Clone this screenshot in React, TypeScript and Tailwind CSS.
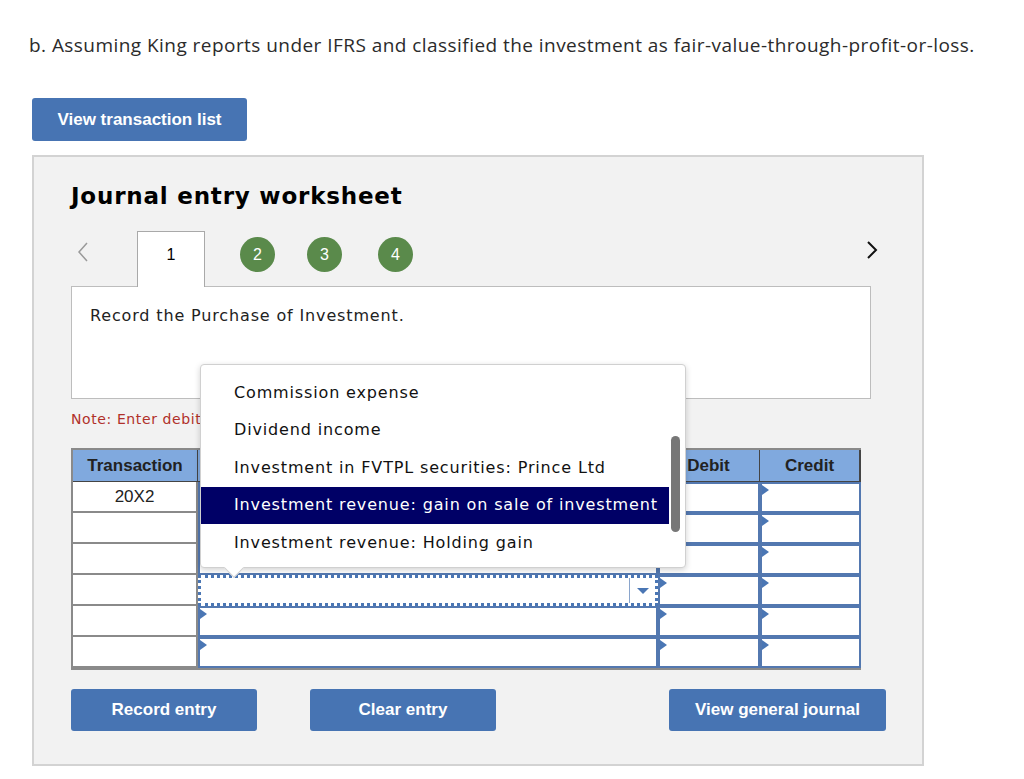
import React from 'react';

const options = [
  'Commission expense',
  'Dividend income',
  'Investment in FVTPL securities: Prince Ltd',
  'Investment revenue: gain on sale of investment',
  'Investment revenue: Holding gain',
];

const verdana = "font-['DejaVu_Sans',Verdana,sans-serif]";
const arial = "font-['Liberation_Sans',Arial,sans-serif]";
const proxima = "font-['Open_Sans','Lato',sans-serif]";

function Marker() {
  return (
    <span className="absolute left-0 top-[1px] h-0 w-0 border-y-[5px] border-l-[7px] border-y-transparent border-l-[#4a76b4]" />
  );
}

function BlueCell({ marker = true }: { marker?: boolean }) {
  return (
    <div className="relative h-full border-2 border-[#5378b0] bg-white">
      {marker && <Marker />}
    </div>
  );
}

function ActionButton({ label, width }: { label: string; width: string }) {
  return (
    <button
      className={`${arial} ${width} h-[42px] rounded-[3px] bg-[#4774b3] text-[17px] font-bold text-white`}
    >
      {label}
    </button>
  );
}

export default function App() {
  const rows = [0, 1, 2, 3, 4, 5];

  return (
    <div className="min-h-[779px] bg-white pl-[29px] pt-[33px]">
      <p className={`${proxima} text-[19px] leading-[24px] tracking-[0.45px] text-[#2b2b2b]`}>
        b. Assuming King reports under IFRS and classified the investment as fair-value-through-profit-or-loss.
      </p>

      <button
        className={`${arial} ml-[3px] mt-[41px] h-[43px] w-[215px] rounded-[3px] bg-[#4774b3] text-[17px] font-bold text-white`}
      >
        View transaction list
      </button>

      <div className="relative ml-[3px] mt-[14px] h-[611px] w-[892px] border-2 border-[#d3d3d3] bg-[#f2f2f2] pl-[37px] pt-[25px]">
        <h2 className={`${verdana} text-[23px] font-bold leading-[28px] tracking-[0.8px] text-black`}>Journal entry worksheet</h2>

        {/* tabs */}
        <div className="mt-[21px] flex h-[55px] w-[810px] items-end">
          <div className="flex h-full w-[66px] items-center">
            <svg width="14" height="22" viewBox="0 0 14 22" className="mb-[14px] ml-[5px]">
              <path d="M11 2 L3 11 L11 20" fill="none" stroke="#9a9a9a" strokeWidth="1.5" />
            </svg>
          </div>
          <div className={`${arial} relative z-10 mb-[-1px] flex h-[56px] w-[68px] justify-center border border-b-0 border-[#a9a9a9] bg-white pt-[11px] text-[16px] text-black`}>
            1
          </div>
          <div className="flex h-full items-center gap-[32px] pb-[8px] pl-[35px]">
            {['2', '3', '4'].map((n, i) => (
              <span
                key={n}
                className={`${arial} flex h-[35px] w-[35px] items-center justify-center rounded-full bg-[#5a8a4b] text-[16px] text-white ${i === 2 ? 'ml-[4px]' : ''}`}
              >
                {n}
              </span>
            ))}
          </div>
          <div className="ml-auto flex h-full w-[40px] items-center justify-center">
            <svg width="14" height="20" viewBox="0 0 14 20" className="mb-[18px] ml-[22px]">
              <path d="M3 2 L11 10 L3 18" fill="none" stroke="#111" strokeWidth="2" />
            </svg>
          </div>
        </div>

        <div className="h-[113px] w-[800px] border border-[#bdbdbd] bg-white pl-[18px] pt-[18px]">
          <p className={`${verdana} text-[16px] leading-[22px] tracking-[0.85px] text-[#222]`}>Record the Purchase of Investment.</p>
        </div>

        <p className={`${verdana} mt-[10px] text-[14px] leading-[20px] tracking-[0.6px] text-[#b0302a]`}>
          Note: Enter debits before credits.
        </p>

        {/* table */}
        <div className="mt-[19px] w-[790px] border-b-2 border-l-2 border-[#8a8a8a]">
          <div className={`${arial} grid h-[34px] grid-cols-[125px_460px_102px_101px] border-t-2 border-[#8a8a8a] bg-[#80a9de] text-[17px] font-bold text-[#222]`}>
            <div className="flex items-center justify-center border-r border-b border-[#444]">Transaction</div>
            <div className="flex items-center justify-center border-r border-b border-[#444]">General Journal</div>
            <div className="flex items-center justify-center border-r border-b border-[#444]">Debit</div>
            <div className="flex items-center justify-center border-b border-r-2 border-[#444]">Credit</div>
          </div>
          {rows.map((r) => (
            <div key={r} className="grid h-[31px] grid-cols-[125px_460px_102px_101px] bg-[#8a8a8a]">
              <div className={`${arial} flex items-center justify-center border-r-2 border-b-2 border-[#8a8a8a] bg-white text-[17px] text-[#222] ${r === 5 ? 'border-b-0' : ''}`}>
                {r === 0 ? '20X2' : ''}
              </div>
              <div className="bg-white">
                {r === 3 ? (
                  <div className="flex h-full border-[3px] border-dotted border-[#4a76b4] bg-white">
                    <div className="flex-1" />
                    <div className="flex w-[26px] items-center justify-center border-l border-[#8aa5cc]">
                      <span className="h-0 w-0 border-x-[6px] border-t-[6px] border-x-transparent border-t-[#4a76b4]" />
                    </div>
                  </div>
                ) : (
                  <BlueCell />
                )}
              </div>
              <BlueCell />
              <BlueCell />
            </div>
          ))}
        </div>

        <div className="mt-[19px] flex w-[815px] items-center">
          <ActionButton label="Record entry" width="w-[186px]" />
          <div className="ml-[53px]">
            <ActionButton label="Clear entry" width="w-[186px]" />
          </div>
          <div className="ml-auto">
            <ActionButton label="View general journal" width="w-[217px]" />
          </div>
        </div>

        {/* open dropdown */}
        <div className="absolute left-[166px] top-[207px] z-20 h-[204px] w-[486px] rounded-[4px] border border-[#d0d0d0] bg-white pt-[9px] shadow-[0_2px_6px_rgba(0,0,0,0.18)]">
          {options.map((o, i) => (
            <div
              key={o}
              className={`${verdana} flex h-[37.5px] w-[468px] items-center pl-[33px] text-[16px] tracking-[0.85px] ${i === 3 ? 'bg-[#000066] text-white' : 'text-[#111]'}`}
            >
              {o}
            </div>
          ))}
          <div className="absolute right-[5px] top-[71px] h-[96px] w-[9px] rounded-full bg-[#777]" />
          <div className="absolute bottom-[-8px] left-[26px] h-[14px] w-[14px] rotate-45 border-b border-r border-[#d0d0d0] bg-white" />
        </div>
      </div>
    </div>
  );
}
